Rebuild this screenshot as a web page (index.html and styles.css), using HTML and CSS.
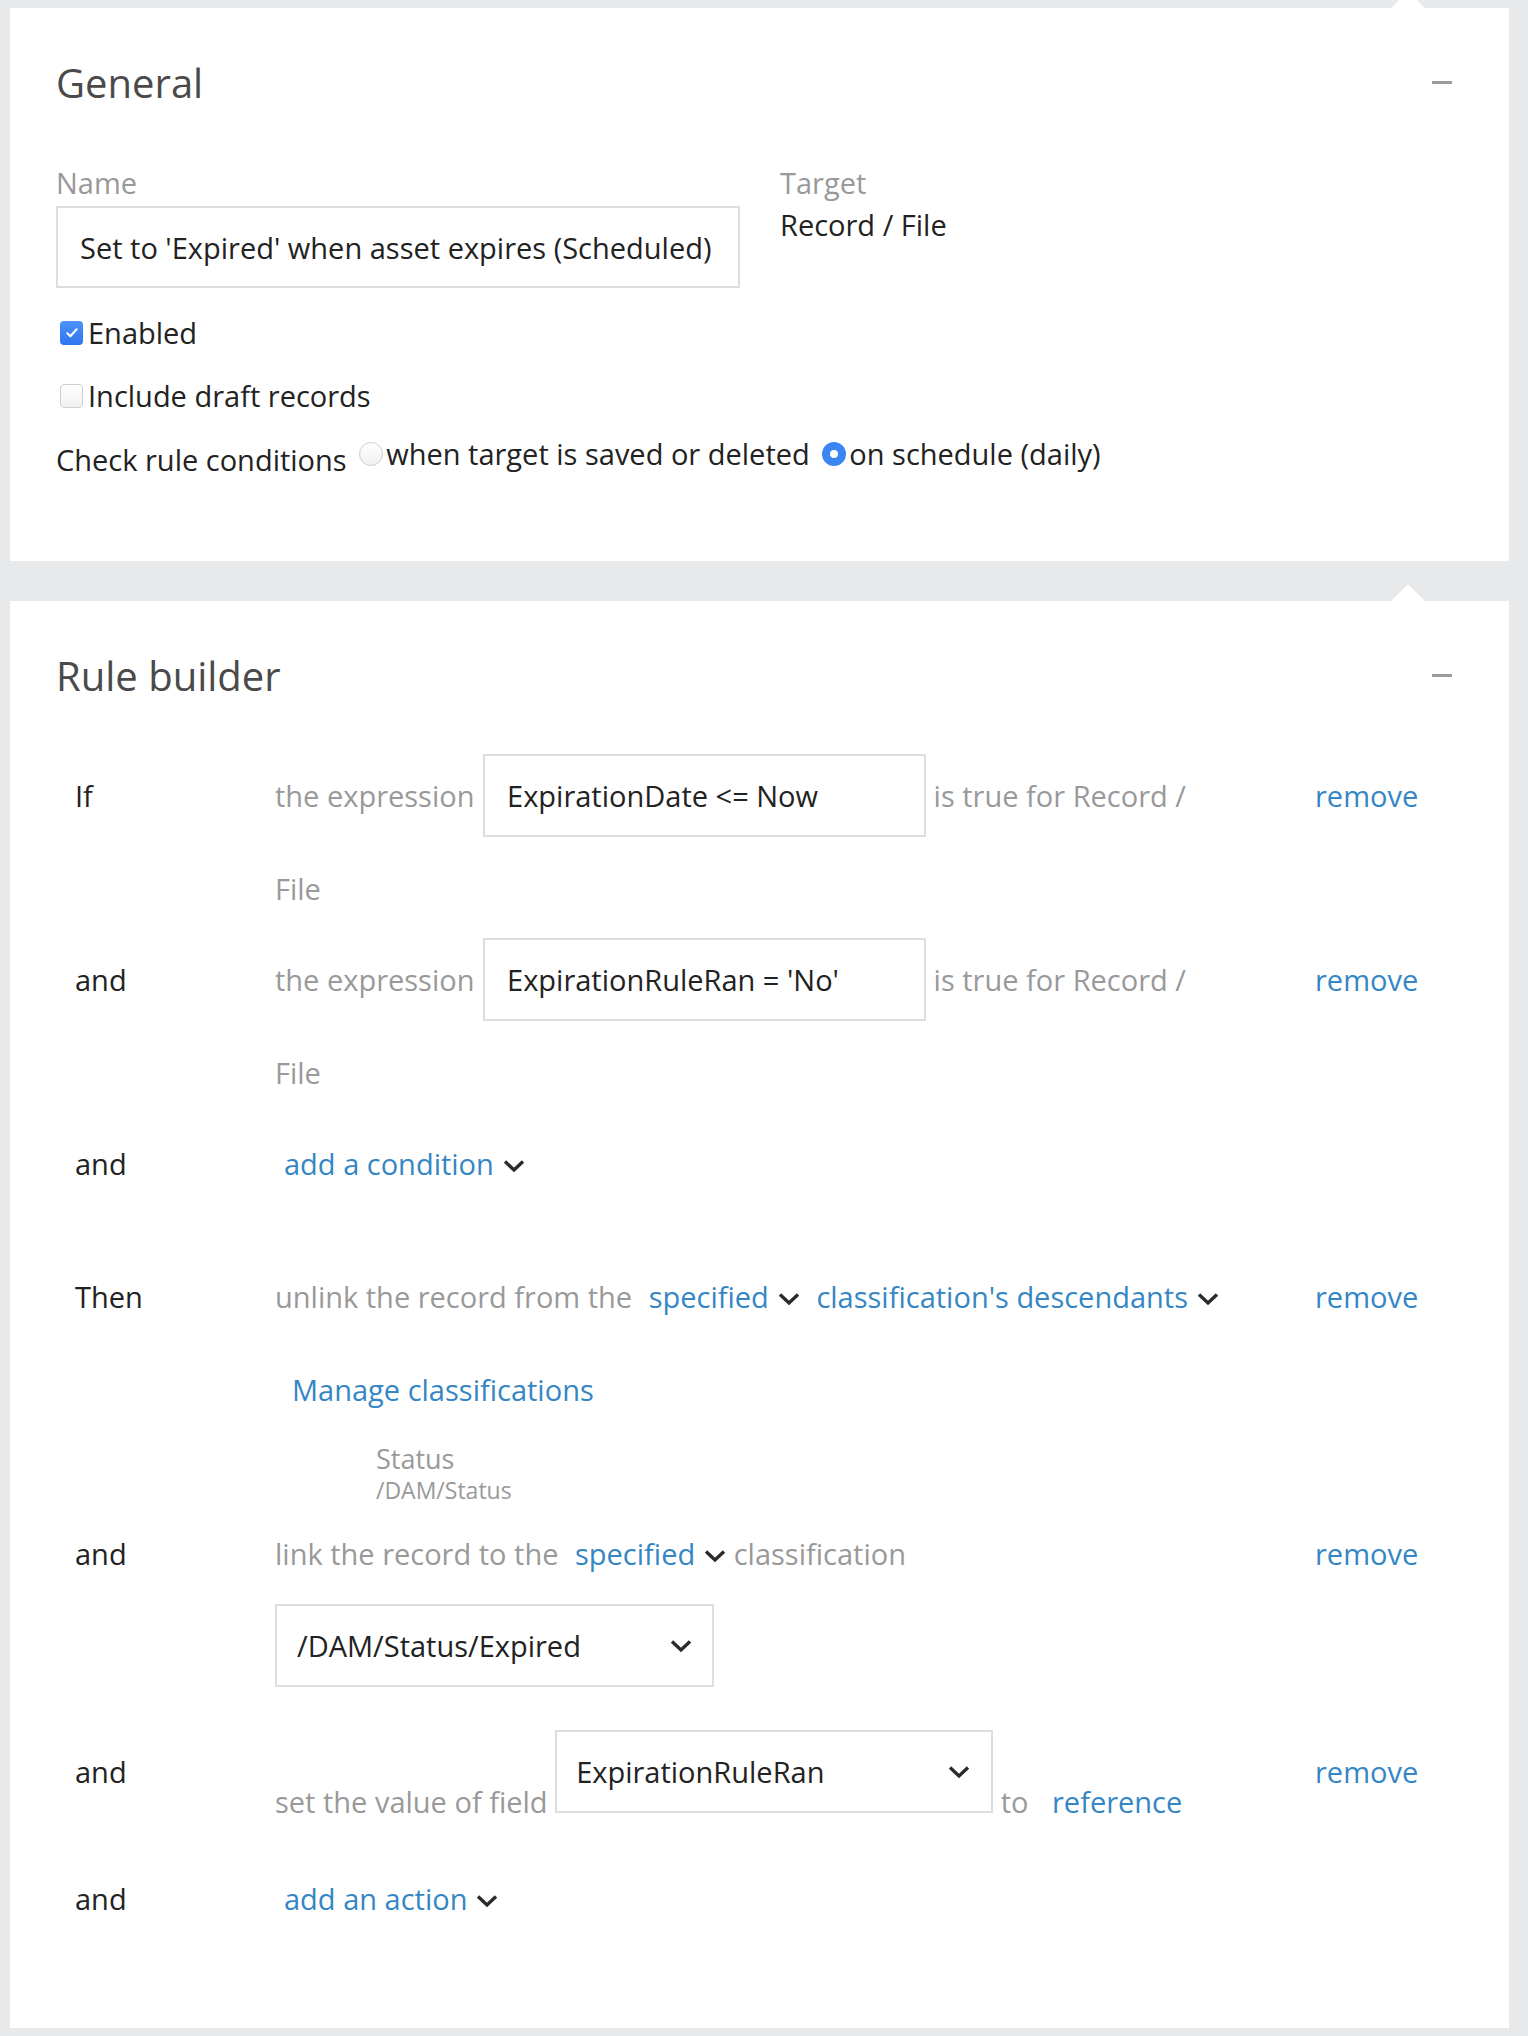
FILE: index.html
```html
<!DOCTYPE html>
<html lang="en">
<head>
<meta charset="utf-8">
<title>Rule editor</title>
<link rel="stylesheet" href="styles.css">
</head>
<body>
<div class="page">
  <section class="card">
    <div class="card-head">
      <h2 class="card-title">General</h2>
      <span class="collapse" aria-label="collapse"></span>
    </div>
    <div class="fields">
      <div class="field name-field">
        <div class="label">Name</div>
        <div class="textbox">Set to 'Expired' when asset expires (Scheduled)</div>
      </div>
      <div class="field target-field">
        <div class="label">Target</div>
        <div class="value">Record / File</div>
      </div>
    </div>
    <div class="check-row first">
      <span class="cb checked"><svg viewBox="0 0 24 24" width="16" height="16"><path d="M5 12.5 L9.5 17 L19 6.5" fill="none" stroke="#fff" stroke-width="3.2" stroke-linecap="round" stroke-linejoin="round"/></svg></span>
      <span>Enabled</span>
    </div>
    <div class="check-row">
      <span class="cb"></span>
      <span>Include draft records</span>
    </div>
    <div class="radio-row">Check rule conditions <span class="opt"><span class="radio"></span>when target is saved or deleted</span> <span class="opt"><span class="radio on"></span>on schedule (daily)</span></div>
  </section>

  <section class="card">
    <div class="card-head">
      <h2 class="card-title">Rule builder</h2>
      <span class="collapse" aria-label="collapse"></span>
    </div>

    <div class="rules conditions">
      <div class="rule-row">
        <div class="kw">If</div>
        <div class="body"><span>the expression</span> <span class="expr">ExpirationDate &lt;= Now</span> <span>is true for Record /</span> <span>File</span></div>
        <div class="remove">remove</div>
      </div>
      <div class="rule-row">
        <div class="kw">and</div>
        <div class="body"><span>the expression</span> <span class="expr">ExpirationRuleRan = 'No'</span> <span>is true for Record /</span> <span>File</span></div>
        <div class="remove">remove</div>
      </div>
      <div class="rule-row">
        <div class="kw">and</div>
        <div class="body"><span class="dd">add a condition<svg class="chev" viewBox="0 0 22 14" width="22" height="14"><polyline points="2,2.5 11,11 20,2.5" fill="none" stroke="#2b2b2b" stroke-width="3.4"/></svg></span></div>
        <div class="remove"></div>
      </div>
    </div>

    <div class="rules actions">
      <div class="rule-row">
        <div class="kw">Then</div>
        <div class="body">
          <div>unlink the record from the <span class="dd">specified<svg class="chev" viewBox="0 0 22 14" width="22" height="14"><polyline points="2,2.5 11,11 20,2.5" fill="none" stroke="#2b2b2b" stroke-width="3.4"/></svg></span> <span class="dd">classification's descendants<svg class="chev" viewBox="0 0 22 14" width="22" height="14"><polyline points="2,2.5 11,11 20,2.5" fill="none" stroke="#2b2b2b" stroke-width="3.4"/></svg></span></div>
          <div class="manage">Manage classifications</div>
          <div class="tree-item">
            <div class="tree-name">Status</div>
            <div class="tree-path">/DAM/Status</div>
          </div>
        </div>
        <div class="remove">remove</div>
      </div>
      <div class="rule-row">
        <div class="kw">and</div>
        <div class="body">
          <div>link the record to the <span class="dd">specified<svg class="chev" viewBox="0 0 22 14" width="22" height="14"><polyline points="2,2.5 11,11 20,2.5" fill="none" stroke="#2b2b2b" stroke-width="3.4"/></svg></span> classification</div>
          <div class="select block-select"><span>/DAM/Status/Expired</span><svg viewBox="0 0 22 14" width="22" height="14"><polyline points="2,2.5 11,11 20,2.5" fill="none" stroke="#2b2b2b" stroke-width="3.4"/></svg></div>
        </div>
        <div class="remove">remove</div>
      </div>
      <div class="rule-row tall">
        <div class="kw">and</div>
        <div class="body">set the value of field <span class="select inline-select"><span class="select-inner"><span>ExpirationRuleRan</span><svg viewBox="0 0 22 14" width="22" height="14"><polyline points="2,2.5 11,11 20,2.5" fill="none" stroke="#2b2b2b" stroke-width="3.4"/></svg></span></span> to <span class="dd ref">reference</span></div>
        <div class="remove">remove</div>
      </div>
      <div class="rule-row">
        <div class="kw">and</div>
        <div class="body"><span class="dd">add an action<svg class="chev" viewBox="0 0 22 14" width="22" height="14"><polyline points="2,2.5 11,11 20,2.5" fill="none" stroke="#2b2b2b" stroke-width="3.4"/></svg></span></div>
        <div class="remove"></div>
      </div>
    </div>
  </section>
</div>
</body>
</html>
```

FILE: styles.css
```css
html, body {
  margin: 0;
  padding: 0;
  background: #e8e9eb;
}

body {
  font-family: "Open Sans", "Noto Sans", sans-serif;
  font-size: 29px;
  color: #222;
}

.page {
  padding: 8px 19px 6px 10px;
  display: flex;
  flex-direction: column;
  gap: 40px;
}

.card {
  position: relative;
  background: #fff;
  padding: 50px 57px 80px 46px;
}

.card::before {
  content: "";
  position: absolute;
  top: -12px;
  left: 1386px;
  width: 24px;
  height: 24px;
  background: #fff;
  border-radius: 3px;
  transform: rotate(45deg);
}

.card-head {
  display: flex;
  align-items: center;
  justify-content: space-between;
  position: relative;
}

.card-title {
  margin: 0;
  font-size: 40px;
  font-weight: 400;
  line-height: 49px;
  color: #4a4a4a;
}

.collapse {
  width: 20px;
  height: 3px;
  background: #9b9b9b;
}

/* General */
.fields {
  display: flex;
  gap: 40px;
  margin-top: 55px;
  line-height: 42px;
}

.name-field {
  width: 684px;
}

.label {
  color: #999;
}

.textbox {
  margin-top: 2px;
  height: 82px;
  box-sizing: border-box;
  border: 2px solid #dedede;
  padding: 0 22px;
  line-height: 80px;
  color: #222;
  white-space: nowrap;
}

.check-row {
  display: flex;
  align-items: center;
  line-height: 42px;
  margin-top: 21px;
}

.check-row.first {
  margin-top: 24px;
}

.cb {
  width: 23px;
  height: 24px;
  box-sizing: border-box;
  margin-left: 4px;
  margin-right: 5px;
  border-radius: 4px;
  border: 1px solid #cfcfcf;
  background: linear-gradient(#fff, #f1f1f1);
  display: flex;
  align-items: center;
  justify-content: center;
}

.cb.checked {
  border: none;
  background: linear-gradient(#4d93f8, #2f74ef);
}

.radio-row {
  margin-top: 22px;
  line-height: 42px;
}

.opt {
  display: inline-flex;
  align-items: center;
  vertical-align: 5px;
  line-height: 30px;
}

.radio {
  display: inline-block;
  width: 24px;
  height: 24px;
  box-sizing: border-box;
  border-radius: 50%;
  border: 1px solid #cfcfcf;
  background: linear-gradient(#fff, #f0f0f0);
  margin: 0 3px 0 5px;
}

.radio.on {
  border: 8px solid #3c86f4;
  background: #fff;
}

/* Rule builder */
.rules {
  margin-left: 19px;
}

.conditions {
  margin-top: 54px;
}

.actions {
  margin-top: 42px;
}

.rule-row {
  display: grid;
  grid-template-columns: 200px 950px 1fr;
  align-items: start;
  line-height: 83px;
  padding-bottom: 8px;
}

.rule-row.tall {
  padding-bottom: 14px;
}

.kw {
  color: #222;
}

.body {
  color: #999;
}

.remove {
  padding-left: 90px;
  color: #3586c4;
}

.expr {
  display: inline-block;
  vertical-align: top;
  width: 443px;
  height: 83px;
  box-sizing: border-box;
  border: 2px solid #dedede;
  padding: 0 22px;
  margin-left: 1px;
  line-height: 79px;
  margin-bottom: 10px;
  color: #222;
  white-space: nowrap;
}

.dd {
  color: #3586c4;
  padding-left: 9px;
  white-space: nowrap;
}

.dd.ref {
  padding-left: 16px;
}

.chev {
  margin-left: 9px;
  vertical-align: 2px;
}

.manage {
  margin-top: 10px;
  padding-left: 17px;
  color: #3586c4;
}

.tree-item {
  margin-top: 11px;
  padding-left: 101px;
  color: #999;
}

.tree-name {
  font-size: 27px;
  line-height: 34px;
}

.tree-path {
  font-size: 23px;
  line-height: 28px;
}

.select {
  box-sizing: border-box;
  border: 2px solid #dedede;
  color: #222;
  height: 83px;
}

.block-select {
  display: flex;
  align-items: center;
  justify-content: space-between;
  width: 439px;
  margin-top: 9px;
  margin-bottom: 35px;
  padding: 0 20px 0 20px;
  line-height: 79px;
}

.inline-select {
  display: inline-block;
  vertical-align: baseline;
  overflow: hidden;
  width: 438px;
}

.select-inner {
  display: flex;
  align-items: center;
  justify-content: space-between;
  height: 79px;
  padding: 0 21px 0 19px;
  line-height: 79px;
}
```
